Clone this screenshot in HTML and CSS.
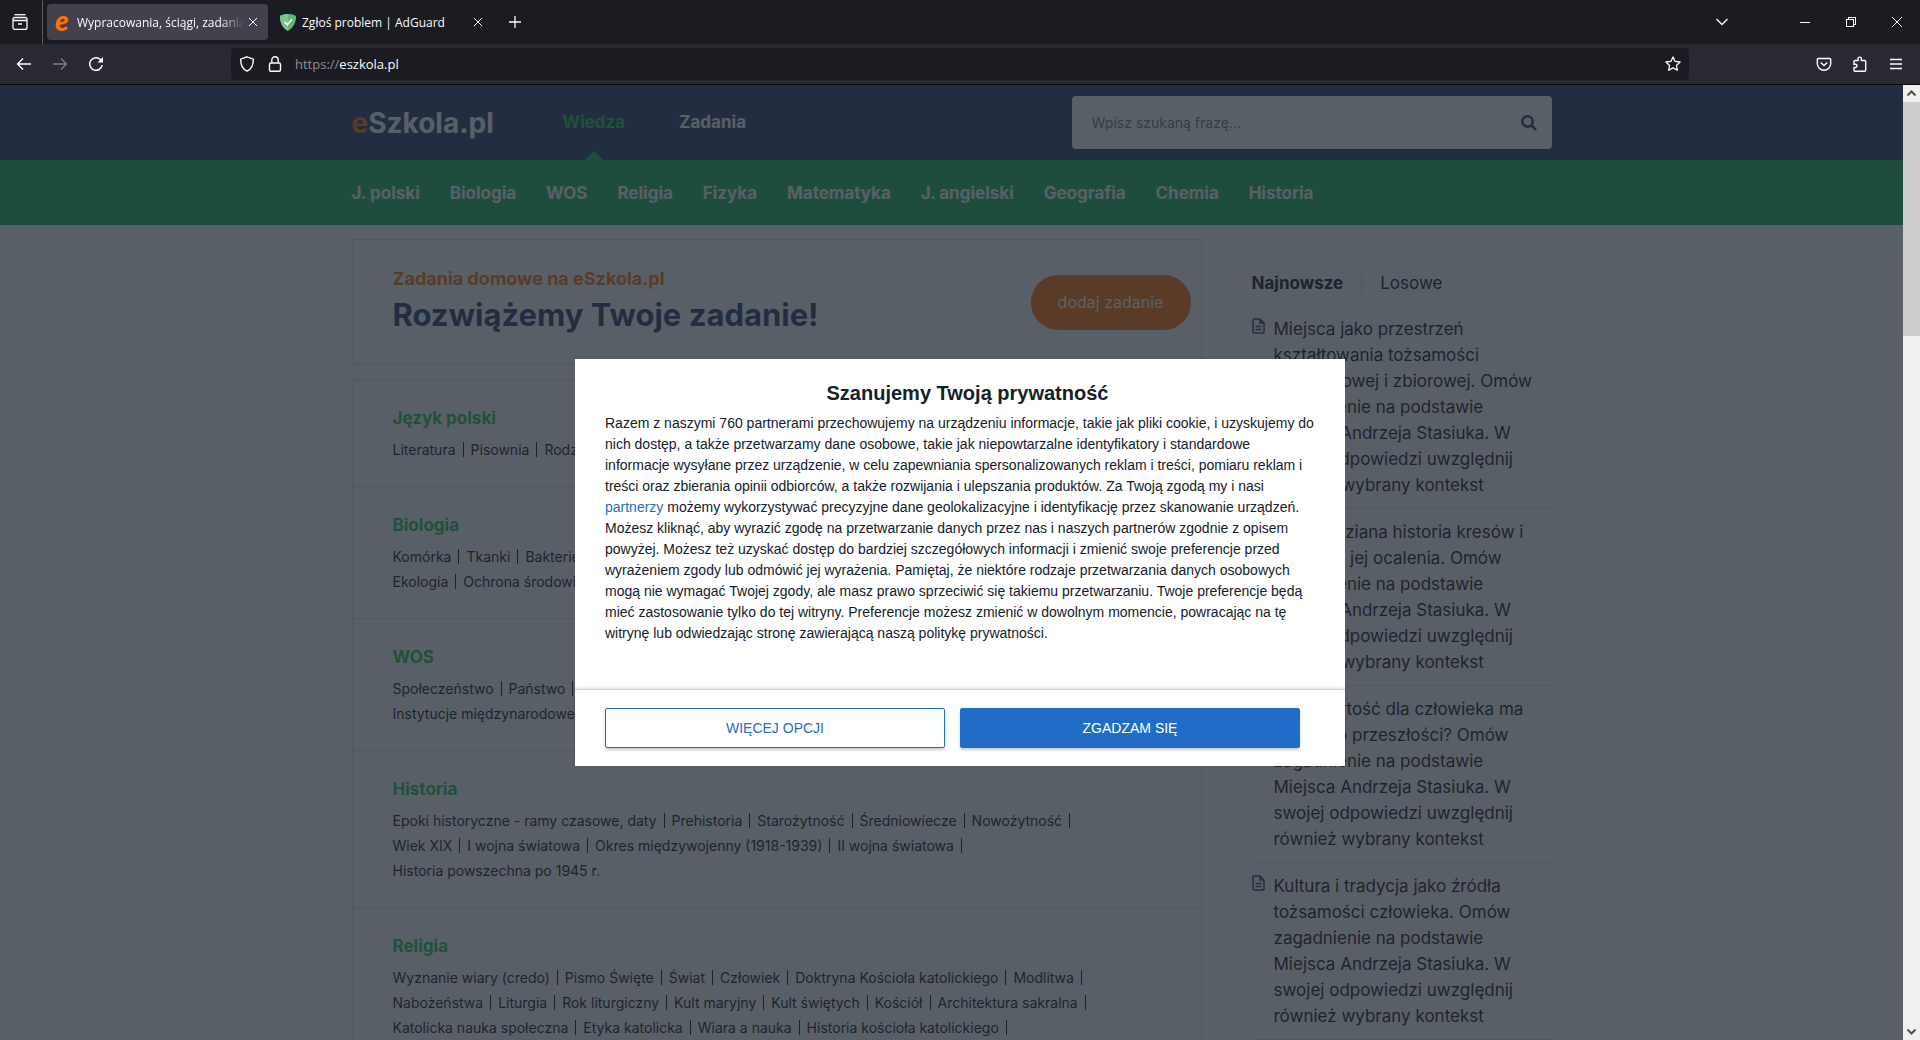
FILE: index.html
```
<!DOCTYPE html>
<html lang="pl">
<head>
    <meta charset="UTF-8">
    <title>eSzkola.pl</title>
    <link rel="stylesheet" href="styles.css">
</head>
<body>

<div class="tabbar">
    <button class="icon-btn view-btn" aria-label="Przeglądaj karty">
        <svg width="16" height="16" viewBox="0 0 16 16"><path d="M2.500 .7h11"/><rect x="1" y="3.500" width="14" height="12" rx="2"/><path d="M1 6.500h14M6 10h4"/></svg>
    </button>
    <div class="tab active">
        <span class="fav-e">e</span>
        <span class="tab-title fade">Wypracowania, ściągi, zadania d</span>
        <button class="icon-btn close-btn" aria-label="Zamknij"><svg width="10" height="10" viewBox="0 0 10 10"><path d="M1 1l8 8M9 1l-8 8"/></svg></button>
    </div>
    <div class="tab">
        <svg class="fav" width="16" height="17" viewBox="0 0 16 17"><path fill="#67b279" stroke="none" d="M8 0c2.500 0 5.500.6 8 1.900 0 2.900 0 10-8 15.100C0 12 0 4.800 0 1.900 2.500.6 5.500 0 8 0z"/><path fill="#74c98a" stroke="none" d="M8 0C5.500 0 2.500.6 0 1.900 0 4.800 0 12 8 17z"/><path stroke="#fff" stroke-width="1.600" d="M4.600 8l2.700 2.800 4.600-5.600"/></svg>
        <span class="tab-title">Zgłoś problem | AdGuard</span>
        <button class="icon-btn close-btn" aria-label="Zamknij"><svg width="10" height="10" viewBox="0 0 10 10"><path d="M1 1l8 8M9 1l-8 8"/></svg></button>
    </div>
    <button class="icon-btn new-btn" aria-label="Nowa karta"><svg width="12" height="12" viewBox="0 0 12 12"><path d="M6 0v12M0 6h12"/></svg></button>
    <div class="window-btns">
        <button class="icon-btn list-btn" aria-label="Lista kart"><svg width="12" height="8" viewBox="0 0 12 8"><path d="M.5 1L6 6.500 11.500 1"/></svg></button>
        <button class="icon-btn win-btn" aria-label="Minimalizuj"><svg width="10" height="10" viewBox="0 0 10 10" shape-rendering="crispEdges"><path d="M0 5h10"/></svg></button>
        <button class="icon-btn win-btn" aria-label="Przywróć"><svg width="10" height="10" viewBox="0 0 10 10" shape-rendering="crispEdges"><path d="M.5 2.500h7v7h-7zM2.500 2.500v-2h7v7h-2"/></svg></button>
        <button class="icon-btn win-btn" aria-label="Zamknij okno"><svg width="10" height="10" viewBox="0 0 10 10"><path stroke-width="1" d="M0 0l10 10M10 0L0 10"/></svg></button>
    </div>
</div>

<div class="toolbar">
    <div class="nav-btns">
        <button class="icon-btn tool-btn" aria-label="Wstecz"><svg width="16" height="16" viewBox="0 0 16 16"><path d="M15 8H1.500M7 2.500L1.500 8 7 13.500"/></svg></button>
        <button class="icon-btn tool-btn dim" aria-label="Dalej"><svg width="16" height="16" viewBox="0 0 16 16"><path d="M1 8h13.500M9 2.500L14.500 8 9 13.500"/></svg></button>
        <button class="icon-btn tool-btn" aria-label="Odśwież"><svg width="16" height="16" viewBox="0 0 16 16"><path stroke-width="1.500" d="M14.200 9a6.300 6.300 0 1 1-1.600-5.300L14 5"/><path fill="#fbfbfe" stroke="none" d="M15 1v5.500H9.500z"/></svg></button>
    </div>
    <div class="urlbar">
        <svg width="16" height="16" viewBox="0 0 16 16"><path stroke-width="1.400" d="M8 .8l6.300 2.400c.2 5-1.300 9.500-6.300 12-5-2.500-6.500-7-6.300-12z"/></svg>
        <svg width="16" height="16" viewBox="0 0 16 16"><rect x="2.500" y="7" width="11" height="8.200" rx="1.500" stroke-width="1.400"/><path stroke-width="1.400" d="M4.800 7V4a3.200 3.200 0 0 1 6.400 0v3"/></svg>
        <span class="url">https://<b>eszkola.pl</b></span>
        <svg class="star" width="16" height="16" viewBox="0 0 16 16"><path stroke-linejoin="round" d="M8 .9l2.100 4.500 5 .6-3.700 3.400 1 4.900L8 11.900l-4.400 2.400 1-4.900L.9 6l5-.6z"/></svg>
    </div>
    <div class="ext-btns">
        <button class="icon-btn tool-btn" aria-label="Pocket"><svg width="16" height="16" viewBox="0 0 16 16"><path stroke-width="1.400" d="M2.500 2.500h11a1.200 1.200 0 0 1 1.200 1.200V7.500a6.700 6.700 0 0 1-13.400 0V3.700a1.200 1.200 0 0 1 1.200-1.200z"/><path stroke-width="1.400" d="M4.700 6.500L8 9.600l3.300-3.100"/></svg></button>
        <button class="icon-btn tool-btn" aria-label="Rozszerzenia"><svg width="16" height="16" viewBox="0 0 16 16"><path stroke-width="1.400" d="M2 8.200V5.500c0-.6.400-1 1-1h3V2.800a1.700 1.700 0 0 1 3.400 0v1.700h3.300c.6 0 1 .4 1 1v8.700c0 .6-.4 1-1 1H3c-.6 0-1-.4-1-1v-2.700h1.700a1.700 1.700 0 0 0 0-3.300z"/></svg></button>
        <button class="icon-btn tool-btn" aria-label="Menu"><svg width="16" height="16" viewBox="0 0 16 16"><path d="M2 3.500h12M2 8h12M2 12.500h12"/></svg></button>
    </div>
</div>

<div class="viewport">
    <div class="page">
        <header class="header">
            <div class="container header-row">
                <a href="#" class="logo"><span>e</span>Szkola.pl</a>
                <nav class="main-nav">
                    <a href="#" class="current">Wiedza</a>
                    <a href="#">Zadania</a>
                </nav>
                <form class="search">
                    <input type="text" placeholder="Wpisz szukaną frazę..." aria-label="Szukaj">
                    <button type="button" aria-label="Szukaj"><svg width="16" height="16" viewBox="0 0 16 16"><circle cx="6.500" cy="6.500" r="5.200"/><path d="M10.300 10.300l4.700 4.700"/></svg></button>
                </form>
            </div>
        </header>
        <div class="subjects">
            <nav class="container subjects-row">
                <a href="#">J. polski</a>
                <a href="#">Biologia</a>
                <a href="#">WOS</a>
                <a href="#">Religia</a>
                <a href="#">Fizyka</a>
                <a href="#">Matematyka</a>
                <a href="#">J. angielski</a>
                <a href="#">Geografia</a>
                <a href="#">Chemia</a>
                <a href="#">Historia</a>
            </nav>
        </div>

        <div class="container content">
            <main class="main">
                <section class="banner">
                    <div>
                        <p>Zadania domowe na eSzkola.pl</p>
                        <h1>Rozwiążemy Twoje zadanie!</h1>
                    </div>
                    <button class="add-btn">dodaj zadanie</button>
                </section>

                <div class="box">
                    <section class="subject">
                        <h2>Język polski</h2>
                        <div class="row"><a href="#">Literatura</a><a href="#">Pisownia</a><a href="#">Rodzaje literackie</a></div>
                    </section>
                    <section class="subject">
                        <h2>Biologia</h2>
                        <div class="row"><a href="#">Komórka</a><a href="#">Tkanki</a><a href="#">Bakterie</a></div>
                        <div class="row"><a href="#">Ekologia</a><a href="#">Ochrona środowiska</a></div>
                    </section>
                    <section class="subject">
                        <h2>WOS</h2>
                        <div class="row"><a href="#">Społeczeństwo</a><a href="#">Państwo</a></div>
                        <div class="row"><a href="#">Instytucje międzynarodowe</a></div>
                    </section>
                    <section class="subject">
                        <h2>Historia</h2>
                        <div class="row"><a href="#">Epoki historyczne - ramy czasowe, daty</a><a href="#">Prehistoria</a><a href="#">Starożytność</a><a href="#">Średniowiecze</a><a href="#">Nowożytność</a></div>
                        <div class="row"><a href="#">Wiek XIX</a><a href="#">I wojna światowa</a><a href="#">Okres międzywojenny (1918-1939)</a><a href="#">II wojna światowa</a></div>
                        <div class="row last"><a href="#">Historia powszechna po 1945 r.</a></div>
                    </section>
                    <section class="subject">
                        <h2>Religia</h2>
                        <div class="row"><a href="#">Wyznanie wiary (credo)</a><a href="#">Pismo Święte</a><a href="#">Świat</a><a href="#">Człowiek</a><a href="#">Doktryna Kościoła katolickiego</a><a href="#">Modlitwa</a></div>
                        <div class="row"><a href="#">Nabożeństwa</a><a href="#">Liturgia</a><a href="#">Rok liturgiczny</a><a href="#">Kult maryjny</a><a href="#">Kult świętych</a><a href="#">Kościół</a><a href="#">Architektura sakralna</a></div>
                        <div class="row"><a href="#">Katolicka nauka społeczna</a><a href="#">Etyka katolicka</a><a href="#">Wiara a nauka</a><a href="#">Historia kościoła katolickiego</a></div>
                    </section>
                </div>
            </main>

            <aside class="sidebar">
                <div class="side-tabs">
                    <button class="on">Najnowsze</button>
                    <button>Losowe</button>
                </div>
                <a href="#" class="post">
                    <svg width="13" height="16" viewBox="0 0 13 16"><path d="M1 2c0-.6.400-1 1-1h6l4 4v9c0 .6-.4 1-1 1H2c-.6 0-1-.4-1-1zM8 1v4h4M3.500 8.500h6M3.500 11.500h6"/></svg>
                    <span>Miejsca jako przestrzeń<br>kształtowania tożsamości<br>jednostkowej i zbiorowej. Omów<br>zagadnienie na podstawie<br>Miejsca Andrzeja Stasiuka. W<br>swojej odpowiedzi uwzględnij<br>również wybrany kontekst</span>
                </a>
                <a href="#" class="post">
                    <svg width="13" height="16" viewBox="0 0 13 16"><path d="M1 2c0-.6.400-1 1-1h6l4 4v9c0 .6-.4 1-1 1H2c-.6 0-1-.4-1-1zM8 1v4h4M3.500 8.500h6M3.500 11.500h6"/></svg>
                    <span>Opowiedziana historia kresów i<br>potrzeba jej ocalenia. Omów<br>zagadnienie na podstawie<br>Miejsca Andrzeja Stasiuka. W<br>swojej odpowiedzi uwzględnij<br>również wybrany kontekst</span>
                </a>
                <a href="#" class="post">
                    <svg width="13" height="16" viewBox="0 0 13 16"><path d="M1 2c0-.6.400-1 1-1h6l4 4v9c0 .6-.4 1-1 1H2c-.6 0-1-.4-1-1zM8 1v4h4M3.500 8.500h6M3.500 11.500h6"/></svg>
                    <span>Jaką wartość dla człowieka ma<br>pamięć o przeszłości? Omów<br>zagadnienie na podstawie<br>Miejsca Andrzeja Stasiuka. W<br>swojej odpowiedzi uwzględnij<br>również wybrany kontekst</span>
                </a>
                <a href="#" class="post">
                    <svg width="13" height="16" viewBox="0 0 13 16"><path d="M1 2c0-.6.400-1 1-1h6l4 4v9c0 .6-.4 1-1 1H2c-.6 0-1-.4-1-1zM8 1v4h4M3.500 8.500h6M3.500 11.500h6"/></svg>
                    <span>Kultura i tradycja jako źródła<br>tożsamości człowieka. Omów<br>zagadnienie na podstawie<br>Miejsca Andrzeja Stasiuka. W<br>swojej odpowiedzi uwzględnij<br>również wybrany kontekst</span>
                </a>
            </aside>
        </div>
    </div>

    <div class="scrollbar">
        <svg width="17" height="17" viewBox="0 0 17 17"><path d="M4.500 10.500l4-4 4 4"/></svg>
        <div class="thumb"></div>
        <svg width="17" height="17" viewBox="0 0 17 17"><path d="M4.500 6.500l4 4 4-4"/></svg>
    </div>

    <div class="overlay">
        <div class="modal" role="dialog" aria-labelledby="modal-title">
            <div class="modal-body">
                <h2 id="modal-title">Szanujemy Twoją prywatność</h2>
                <p>Razem z naszymi 760 partnerami przechowujemy na urządzeniu informacje, takie jak pliki cookie, i uzyskujemy do nich dostęp, a także przetwarzamy dane osobowe, takie jak niepowtarzalne identyfikatory i standardowe informacje wysyłane przez urządzenie, w celu zapewniania spersonalizowanych reklam i treści, pomiaru reklam i treści oraz zbierania opinii odbiorców, a także rozwijania i ulepszania produktów. Za Twoją zgodą my i nasi <a href="#">partnerzy</a> możemy wykorzystywać precyzyjne dane geolokalizacyjne i identyfikację przez skanowanie urządzeń. Możesz kliknąć, aby wyrazić zgodę na przetwarzanie danych przez nas i naszych partnerów zgodnie z opisem powyżej. Możesz też uzyskać dostęp do bardziej szczegółowych informacji i zmienić swoje preferencje przed wyrażeniem zgody lub odmówić jej wyrażenia. Pamiętaj, że niektóre rodzaje przetwarzania danych osobowych mogą nie wymagać Twojej zgody, ale masz prawo sprzeciwić się takiemu przetwarzaniu. Twoje preferencje będą mieć zastosowanie tylko do tej witryny. Preferencje możesz zmienić w dowolnym momencie, powracając na tę witrynę lub odwiedzając stronę zawierającą naszą politykę prywatności.</p>
            </div>
            <div class="modal-footer">
                <button class="more">WIĘCEJ OPCJI</button>
                <button class="agree">ZGADZAM SIĘ</button>
            </div>
        </div>
    </div>
</div>

</body>
</html>
```

FILE: styles.css
```
* {
    box-sizing: border-box;
}

body {
    margin: 0;
    height: 100vh;
    display: flex;
    flex-direction: column;
    overflow: hidden;
    font-family: Inter, "Open Sans", sans-serif;
}

a {
    text-decoration: none;
    color: inherit;
}

button, input {
    font-family: inherit;
    border: none;
    background: none;
    padding: 0;
}

h1, h2, p {
    margin: 0;
}

svg {
    flex: none;
    display: block;
    fill: none;
    stroke: #fbfbfe;
    stroke-width: 1.3;
}

/* browser bars */
.tabbar {
    flex: none;
    height: 44px;
    display: flex;
    align-items: center;
    background-color: #1c1b22;
    color: #fbfbfe;
    font: 12px "Open Sans", sans-serif;
}

.icon-btn {
    display: flex;
    align-items: center;
    justify-content: center;
    flex: none;
}

.view-btn {
    width: 43px;
    height: 44px;
    padding-right: 3px;
    border-right: 1px solid #5b5a63;
    margin-right: 4px;
}

.tab {
    width: 221px;
    height: 36px;
    display: flex;
    align-items: center;
    gap: 6px;
    padding: 0 6px 0 8px;
    border-radius: 4px;
    margin-right: 4px;
}

.tab.active {
    background-color: #42414d;
}

.fav-e {
    width: 16px;
    color: #ff7100;
    font: italic 900 28px/20px Lato, sans-serif;
    height: 24px;
}

.tab-title {
    flex: 1;
    overflow: hidden;
    white-space: nowrap;
}

.tab-title.fade {
    -webkit-mask-image: linear-gradient(to left, transparent, #000 24px);
    mask-image: linear-gradient(to left, transparent, #000 24px);
}

.close-btn {
    width: 18px;
    height: 24px;
    margin-left: -6px;
}

.close-btn svg {
    stroke-width: 1;
}

.new-btn {
    width: 36px;
    height: 36px;
}

.window-btns {
    margin-left: auto;
    display: flex;
}

.list-btn {
    width: 36px;
    margin-right: 42px;
}

.win-btn {
    width: 46px;
    height: 44px;
}

.win-btn svg {
    stroke-width: 1;
}

.toolbar {
    flex: none;
    height: 41px;
    display: flex;
    align-items: center;
    background-color: #2b2a33;
    border-bottom: 1px solid #0c0c0d;
}

.nav-btns {
    display: flex;
    width: 231px;
    padding-left: 6px;
}

.tool-btn {
    width: 36px;
    height: 32px;
}

.dim {
    opacity: 0.4;
}

.urlbar {
    flex: 1;
    height: 32px;
    display: flex;
    align-items: center;
    gap: 12px;
    padding: 0 8px;
    border-radius: 4px;
    background-color: #1c1b22;
}

.url {
    color: #8f8f97;
    font: 13px "Open Sans", sans-serif;
}

.url b {
    font-weight: 400;
    color: #fbfbfe;
}

.star {
    margin-left: auto;
}

.ext-btns {
    display: flex;
    justify-content: flex-end;
    width: 231px;
    padding-right: 6px;
}

/* page */
.viewport {
    flex: 1;
    min-height: 0;
    display: flex;
    position: relative;
}

.page {
    flex: 1;
    overflow: hidden;
    background-color: #fff;
    color: #111;
}

.container {
    width: 100%;
    max-width: 1200px;
    margin: 0 auto;
}

.header {
    background-color: #2b3a67;
}

.header-row {
    height: 75px;
    display: flex;
    align-items: center;
    color: #fff;
}

.logo {
    width: 211px;
    font-size: 28px;
    font-weight: 700;
}

.logo span {
    color: #ff7104;
}

.main-nav {
    display: flex;
    gap: 54px;
    height: 75px;
    line-height: 75px;
    font-weight: 700;
    font-size: 17px;
}

.main-nav .current {
    color: #21c150;
    position: relative;
}

.main-nav .current::after {
    content: "";
    position: absolute;
    bottom: 0;
    left: calc(50% - 9px);
    border: 9px solid transparent;
    border-top: none;
    border-bottom-color: #17b95a;
}

.search {
    width: 480px;
    height: 53px;
    margin-left: auto;
    display: flex;
    align-items: center;
    padding: 0 15px 0 20px;
    border-radius: 4px;
    background-color: #fff;
}

.search input {
    flex: 1;
    outline: none;
    font-size: 14px;
}

.search input::placeholder {
    color: #777;
}

.search svg {
    stroke: #2b3a67;
    stroke-width: 2.5;
}

.subjects {
    background-color: #17b95a;
}

.subjects-row {
    height: 65px;
    display: flex;
    align-items: center;
    justify-content: space-between;
    padding-right: 238px;
    color: #fff;
    font-size: 17px;
    font-weight: 700;
}

.content {
    display: flex;
    gap: 50px;
    padding-top: 14px;
}

.main {
    flex: 1;
}

.banner {
    height: 126px;
    display: flex;
    align-items: center;
    justify-content: space-between;
    padding: 0 10px 0 40px;
    border: 1px solid #e2e4e8;
    margin-bottom: 14px;
}

.banner p {
    color: #ff7104;
    font-size: 18px;
    font-weight: 700;
    line-height: 26px;
}

.banner h1 {
    color: #2b3a67;
    font-size: 31px;
    font-weight: 700;
    line-height: 46px;
}

.add-btn {
    width: 160px;
    height: 55px;
    border-radius: 27px;
    background-color: #ff7104;
    color: #fff;
    font-size: 16px;
}

.box {
    border: 1px solid #e2e4e8;
}

.subject {
    padding: 25px 40px 24px;
    border-bottom: 1px solid #e2e4e8;
}

.subject h2 {
    margin-bottom: 6px;
    color: #21c150;
    font-size: 17px;
    line-height: 26px;
}

.row {
    height: 25px;
    display: flex;
    align-items: center;
    font-size: 14px;
    line-height: 15px;
    white-space: nowrap;
}

.row a {
    padding-right: 7px;
    margin-right: 7px;
    border-right: 1px solid #111;
}

.row.last a {
    border: none;
}

.sidebar {
    width: 300px;
    padding-top: 31px;
}

.side-tabs {
    display: flex;
    align-items: center;
    height: 26px;
    margin-bottom: 10px;
}

.side-tabs button {
    font-size: 17px;
    color: #111;
}

.side-tabs .on {
    font-weight: 700;
    padding-right: 18px;
    margin-right: 18px;
    border-right: 1px solid #d8dbe2;
}

.post {
    display: flex;
    gap: 9px;
    padding: 10px 0;
    border-bottom: 1px solid #e2e4e8;
    font-size: 17px;
    line-height: 26px;
    white-space: nowrap;
}

.post svg {
    margin-top: 2px;
    stroke: #2b3a67;
    stroke-width: 1.5;
}

.scrollbar {
    width: 17px;
    display: flex;
    flex-direction: column;
    justify-content: space-between;
    background-color: #f0f0f0;
    position: relative;
    z-index: 2;
}

.scrollbar svg {
    stroke: #505050;
    stroke-width: 2;
}

.thumb {
    height: 234px;
    margin-bottom: auto;
    background-color: #cdcdcd;
}

/* consent window */
.overlay {
    position: absolute;
    inset: 0;
    z-index: 1;
    display: flex;
    align-items: center;
    justify-content: center;
    background-color: rgba(33, 41, 52, 0.75);
    font-family: "Liberation Sans", Arial, sans-serif;
}

.modal {
    width: 770px;
    background-color: #fff;
    color: #142129;
}

.modal-body {
    padding: 19px 15px 45px 30px;
}

.modal-body h2 {
    text-align: center;
    font-size: 20px;
    line-height: 30px;
    margin-bottom: 5px;
}

.modal-body p {
    padding-right: 15px;
    font-size: 14px;
    line-height: 21px;
}

.modal-body a {
    color: #1f6dc6;
}

.modal-footer {
    display: flex;
    gap: 15px;
    padding: 18px 45px 18px 30px;
    border-top: 1px solid #d5d5d5;
    box-shadow: 0 -1px 3px rgba(0, 0, 0, 0.15);
}

.modal-footer button {
    flex: 1;
    height: 40px;
    border: 1px solid #1f6dc6;
    border-radius: 2px;
    box-shadow: 0 2px 3px rgba(0, 0, 0, 0.2);
    color: #1f6dc6;
    font-size: 14px;
}

.modal-footer .agree {
    background-color: #1f6dc6;
    color: #fff;
}
```
